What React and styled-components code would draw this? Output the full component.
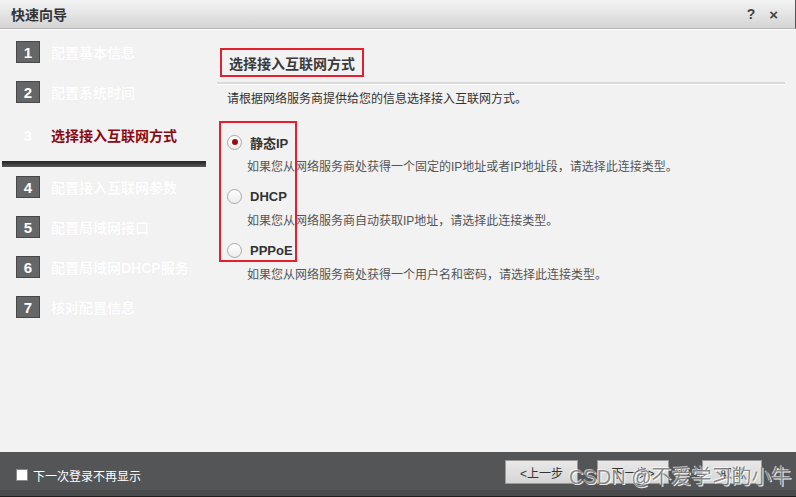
import React, { Component } from 'react';
import styled, { createGlobalStyle } from 'styled-components';

const GlobalStyle = createGlobalStyle`
    html, body {
        margin: 0;
        padding: 0;
        background: #f2f2f2;
    }
    body {
        font-family: "Liberation Sans", "Noto Sans CJK SC", sans-serif;
    }
`;

const cjk = `"Liberation Sans", "Noto Sans CJK SC", sans-serif`;

// styled components
const Window = styled.div`
    position: relative;
    display: flex;
    flex-direction: column;
    width: 796px;
    height: 497px;
    background: #f2f2f2;
    overflow: hidden;
`;

const TitleBar = styled.div`
    display: flex;
    align-items: center;
    height: 28px;
    padding: 0 17px 0 11px;
    background: linear-gradient(#f4f4f4, #d4d4d4);
    border-bottom: 1px solid #b4b4b4;
    border-right: 1px solid #555;
    box-shadow: 0 1px 0 #fff;
`;

const Title = styled.div`
    flex: 1;
    font-family: ${cjk};
    font-size: 14px;
    font-weight: bold;
    color: #333;
`;

const TitleIcon = styled.span`
    margin-left: 14px;
    font-family: "Liberation Sans", sans-serif;
    font-size: ${(p) => p.size}px;
    font-weight: bold;
    color: #444;
`;

const Body = styled.div`
    display: flex;
    flex: 1;
`;

const Sidebar = styled.div`
    width: 207px;
    padding-top: 12px;
`;

const StepRow = styled.div`
    display: flex;
    align-items: center;
    height: ${(p) => (p.active ? 28 : 22)}px;
    margin-bottom: ${(p) => (p.active ? 12 : 18)}px;
    padding-left: 16px;
`;

const StepBox = styled.div`
    display: flex;
    align-items: center;
    justify-content: center;
    width: 22px;
    height: 20px;
    background: ${(p) => (p.active ? 'transparent' : '#656667')};
    border: 1px solid ${(p) => (p.active ? 'transparent' : '#47484a')};
    color: #fff;
    font-family: "Liberation Sans", sans-serif;
    font-size: 15px;
    font-weight: bold;
`;

const StepLabel = styled.div`
    margin-left: 11px;
    font-family: ${cjk};
    font-size: 14px;
    font-weight: bold;
    color: ${(p) => (p.active ? '#8b0a12' : '#fff')};
    text-shadow: ${(p) => (p.active ? 'none' : '0 0 1px rgba(0,0,0,0.06)')};
`;

const ActiveBar = styled.div`
    width: 204px;
    height: 6px;
    margin: 0 0 9px 2px;
    background: linear-gradient(#242424, #555);
`;

const Content = styled.div`
    flex: 1;
    padding: 19px 11px 0 13px;
`;

const HeadingBox = styled.div`
    display: inline-flex;
    align-items: center;
    box-sizing: border-box;
    height: 29px;
    padding: 0 7px;
    border: 2px solid #e5202e;
    font-family: ${cjk};
    font-size: 14px;
    font-weight: bold;
    color: #3a3a3a;
`;

const Separator = styled.div`
    margin: 5px 0 0 -3px;
    height: 2px;
    background: #dadada;
    border-bottom: 1px solid #fff;
`;

const Description = styled.div`
    margin: 4px 0 0 7px;
    line-height: 20px;
    font-family: ${cjk};
    font-size: 12px;
    color: #333;
`;

const OptionList = styled.div`
    position: relative;
    margin-top: 21px;
`;

const Highlight = styled.div`
    position: absolute;
    top: -9px;
    left: -1px;
    width: 78px;
    height: 141px;
    box-sizing: border-box;
    border: 2px solid #e5202e;
    pointer-events: none;
`;

const Option = styled.div`
    margin-bottom: 4px;
`;

const RadioRow = styled.div`
    display: flex;
    align-items: center;
    height: 24px;
    padding-left: 7px;
`;

const Radio = styled.div`
    display: flex;
    align-items: center;
    justify-content: center;
    box-sizing: border-box;
    width: 15px;
    height: 15px;
    border-radius: 50%;
    border: 1px solid #a8a8a8;
    background: linear-gradient(#fff, #ececec);

    &::after {
        content: '';
        display: ${(p) => (p.checked ? 'block' : 'none')};
        width: 6px;
        height: 6px;
        border-radius: 50%;
        background: #9a0a12;
    }
`;

const RadioLabel = styled.div`
    margin-left: 8px;
    font-family: ${cjk};
    font-size: 13px;
    font-weight: bold;
    color: #333;
`;

const OptionDesc = styled.div`
    height: 26px;
    line-height: 26px;
    padding-left: 27px;
    font-family: ${cjk};
    font-size: 12px;
    color: #555;
`;

const Footer = styled.div`
    display: flex;
    align-items: center;
    box-sizing: border-box;
    height: 45px;
    padding: 0 34px 6px 16px;
    background: #535557;
    border-bottom: 1px solid #1e1e1e;
    box-shadow: inset 0 -6px 0 #4a4b4d;
`;

const CheckLabel = styled.label`
    display: flex;
    align-items: center;
    flex: 1;
    margin-top: 8px;
    font-family: ${cjk};
    font-size: 12px;
    color: #fff;
`;

const CheckBox = styled.span`
    box-sizing: border-box;
    width: 12px;
    height: 12px;
    margin-right: 5px;
    background: #fff;
    border: 1px solid #8a8a8a;
`;

const Button = styled.button`
    box-sizing: border-box;
    width: ${(p) => p.width}px;
    height: 24px;
    margin-left: ${(p) => p.gap}px;
    margin-top: 2px;
    padding: 0;
    background: linear-gradient(#e8e8e8, #d6d6d6);
    border: 1px solid #9a9a9a;
    font-family: ${cjk};
    font-size: 12px;
    color: #333;
`;

// watermark stamped over the footer in the screenshot
const Watermark = styled.div`
    position: absolute;
    left: 569px;
    top: 461px;
    font-family: ${cjk};
    font-size: 20px;
    color: rgba(120, 120, 120, 0.85);
    text-shadow: 1px 1px 0 rgba(255, 255, 255, 0.9), -1px -1px 0 rgba(255, 255, 255, 0.6);
    white-space: nowrap;
    pointer-events: none;
`;

const steps = [
    '配置基本信息',
    '配置系统时间',
    '选择接入互联网方式',
    '配置接入互联网参数',
    '配置局域网接口',
    '配置局域网DHCP服务',
    '核对配置信息',
];

const options = [
    { label: '静态IP', desc: '如果您从网络服务商处获得一个固定的IP地址或者IP地址段，请选择此连接类型。' },
    { label: 'DHCP', desc: '如果您从网络服务商自动获取IP地址，请选择此连接类型。' },
    { label: 'PPPoE', desc: '如果您从网络服务商处获得一个用户名和密码，请选择此连接类型。' },
];

class App extends Component {
    constructor(props) {
        super(props);
        this.state = {
            activeStep: 2,
            selected: 0,
        };
    }

    render() {
        const { activeStep, selected } = this.state;

        return (
            <Window>
                <GlobalStyle />
                <TitleBar>
                    <Title>快速向导</Title>
                    <TitleIcon size={14}>?</TitleIcon>
                    <TitleIcon size={15}>×</TitleIcon>
                </TitleBar>
                <Body>
                    <Sidebar>
                        {
                            steps.map((step, stepIndex) => {
                                const active = stepIndex === activeStep;
                                return (
                                    <React.Fragment key={`wizard-step-${stepIndex}`}>
                                        <StepRow active={active}>
                                            <StepBox active={active}>{stepIndex + 1}</StepBox>
                                            <StepLabel active={active}>{step}</StepLabel>
                                        </StepRow>
                                        {active && <ActiveBar />}
                                    </React.Fragment>
                                );
                            })
                        }
                    </Sidebar>
                    <Content>
                        <HeadingBox>选择接入互联网方式</HeadingBox>
                        <Separator />
                        <Description>请根据网络服务商提供给您的信息选择接入互联网方式。</Description>
                        <OptionList>
                            {
                                options.map((option, optionIndex) => {
                                    return (
                                        <Option
                                            key={`wan-option-${optionIndex}`}
                                            onClick={() => this.setState({ selected: optionIndex })}
                                        >
                                            <RadioRow>
                                                <Radio checked={optionIndex === selected} />
                                                <RadioLabel>{option.label}</RadioLabel>
                                            </RadioRow>
                                            <OptionDesc>{option.desc}</OptionDesc>
                                        </Option>
                                    );
                                })
                            }
                            <Highlight />
                        </OptionList>
                    </Content>
                </Body>
                <Footer>
                    <CheckLabel>
                        <CheckBox />
                        下一次登录不再显示
                    </CheckLabel>
                    <Button width={73} gap={0}>&lt;上一步</Button>
                    <Button width={72} gap={19}>下一步&gt;</Button>
                    <Button width={60} gap={33}>取消</Button>
                </Footer>
                <Watermark>CSDN @不爱学习的小牛</Watermark>
            </Window>
        );
    }
}

export default App;
